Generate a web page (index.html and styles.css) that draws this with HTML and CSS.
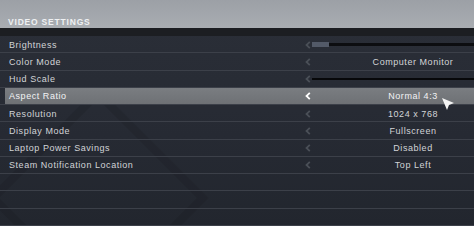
FILE: index.html
```html
<!DOCTYPE html>
<html>
<head>
<meta charset="utf-8">
<link rel="stylesheet" href="styles.css">
</head>
<body>
<div class="page">
  <div class="header"><span class="title">VIDEO SETTINGS</span></div>
  <div class="band"></div>
  <div class="list">
    <div class="row"><div class="cell"><span class="label">Brightness</span><svg class="arrow" width="6" height="8" viewBox="0 0 6 8"><path d="M4.8 0.8 L1.5 4 L4.8 7.2" fill="none" stroke-width="1.8"/></svg><div class="value"><div class="track"><div class="fill"></div></div></div></div></div>
    <div class="row"><div class="cell"><span class="label">Color Mode</span><svg class="arrow" width="6" height="8" viewBox="0 0 6 8"><path d="M4.8 0.8 L1.5 4 L4.8 7.2" fill="none" stroke-width="1.8"/></svg><div class="value">Computer Monitor</div></div></div>
    <div class="row"><div class="cell"><span class="label">Hud Scale</span><svg class="arrow" width="6" height="8" viewBox="0 0 6 8"><path d="M4.8 0.8 L1.5 4 L4.8 7.2" fill="none" stroke-width="1.8"/></svg><div class="value"><div class="track dark"></div></div></div></div>
    <div class="row"><div class="cell active"><span class="label">Aspect Ratio</span><svg class="arrow" width="6" height="8" viewBox="0 0 6 8"><path d="M4.8 0.8 L1.5 4 L4.8 7.2" fill="none" stroke-width="1.8"/></svg><div class="value">Normal 4:3</div></div></div>
    <div class="row"><div class="cell"><span class="label">Resolution</span><svg class="arrow" width="6" height="8" viewBox="0 0 6 8"><path d="M4.8 0.8 L1.5 4 L4.8 7.2" fill="none" stroke-width="1.8"/></svg><div class="value">1024 x 768</div></div></div>
    <div class="row"><div class="cell"><span class="label">Display Mode</span><svg class="arrow" width="6" height="8" viewBox="0 0 6 8"><path d="M4.8 0.8 L1.5 4 L4.8 7.2" fill="none" stroke-width="1.8"/></svg><div class="value">Fullscreen</div></div></div>
    <div class="row"><div class="cell"><span class="label">Laptop Power Savings</span><svg class="arrow" width="6" height="8" viewBox="0 0 6 8"><path d="M4.8 0.8 L1.5 4 L4.8 7.2" fill="none" stroke-width="1.8"/></svg><div class="value">Disabled</div></div></div>
    <div class="row"><div class="cell"><span class="label">Steam Notification Location</span><svg class="arrow" width="6" height="8" viewBox="0 0 6 8"><path d="M4.8 0.8 L1.5 4 L4.8 7.2" fill="none" stroke-width="1.8"/></svg><div class="value">Top Left</div></div></div>
    <div class="row"><div class="cell"></div></div>
    <div class="row"><div class="cell"></div></div>
    <div class="row"><div class="cell"></div></div>
  </div>
  <div class="deco"></div>
  <svg class="cursor" width="14" height="14" viewBox="0 0 14 14"><path d="M1 1 L13 6 L8 8 L6 13 Z" fill="#f4f4f4"/></svg>
</div>
</body>
</html>
```
FILE: styles.css
```css
html, body {
  margin: 0;
  padding: 0;
  width: 474px;
  height: 226px;
  overflow: hidden;
  background: #262a33;
}
.page {
  position: relative;
  width: 474px;
  height: 226px;
  overflow: hidden;
  background: linear-gradient(180deg, #2b2f38 0%, #262a33 60%, #22262e 100%);
  font-family: "Liberation Sans", Arial, sans-serif;
}
.header {
  height: 28px;
  background: linear-gradient(180deg, #9ca0a6 0%, #a9adb2 100%);
  display: flex;
  align-items: flex-end;
  padding-left: 8px;
  box-sizing: border-box;
  padding-bottom: 1px;
}
.title {
  color: #eef0f2;
  font-weight: bold;
  font-size: 8.5px;
  letter-spacing: 0.8px;
  line-height: 10px;
}
.band {
  height: 8px;
  background: #1c1e22;
}
.list {
  position: relative;
  z-index: 1;
}
.row {
  height: 17.25px;
  box-sizing: border-box;
  border-bottom: 1px solid #3c4049;
  display: flex;
}
.cell {
  flex: 1;
  display: grid;
  grid-template-columns: 305px 7px 202px;
  align-items: center;
  color: #d2d4d7;
  font-size: 9px;
  letter-spacing: 0.55px;
  margin: 0 0 -1px 0;
}
.cell.active {
  margin: 0 5px 0 5px;
  background: linear-gradient(180deg, #7a7d81 0%, #6e7175 100%);
  color: #f2f3f4;
  grid-template-columns: 300px 7px 202px;
}
.label {
  padding-left: 9px;
  white-space: nowrap;
}
.cell.active .label {
  padding-left: 4px;
}
.arrow {
  stroke: #4a4f57;
  display: block;
}
.cell.active .arrow {
  stroke: #ffffff;
}
.value {
  text-align: center;
  white-space: nowrap;
  display: flex;
  justify-content: center;
  align-items: center;
}
.track {
  width: 202px;
  height: 3px;
  background: #0c0d10;
  position: relative;
}
.track.dark {
  height: 2px;
  background: #07080a;
}
.fill {
  width: 17px;
  height: 5px;
  position: absolute;
  left: 0;
  top: -1px;
  background: #535a68;
}
.deco {
  position: absolute;
  left: 20px;
  top: 120px;
  width: 140px;
  height: 140px;
  transform: rotate(45deg);
  border: 8px solid rgba(20, 22, 28, 0.18);
  z-index: 0;
}
.cursor {
  position: absolute;
  left: 441px;
  top: 97px;
  z-index: 2;
}
```
